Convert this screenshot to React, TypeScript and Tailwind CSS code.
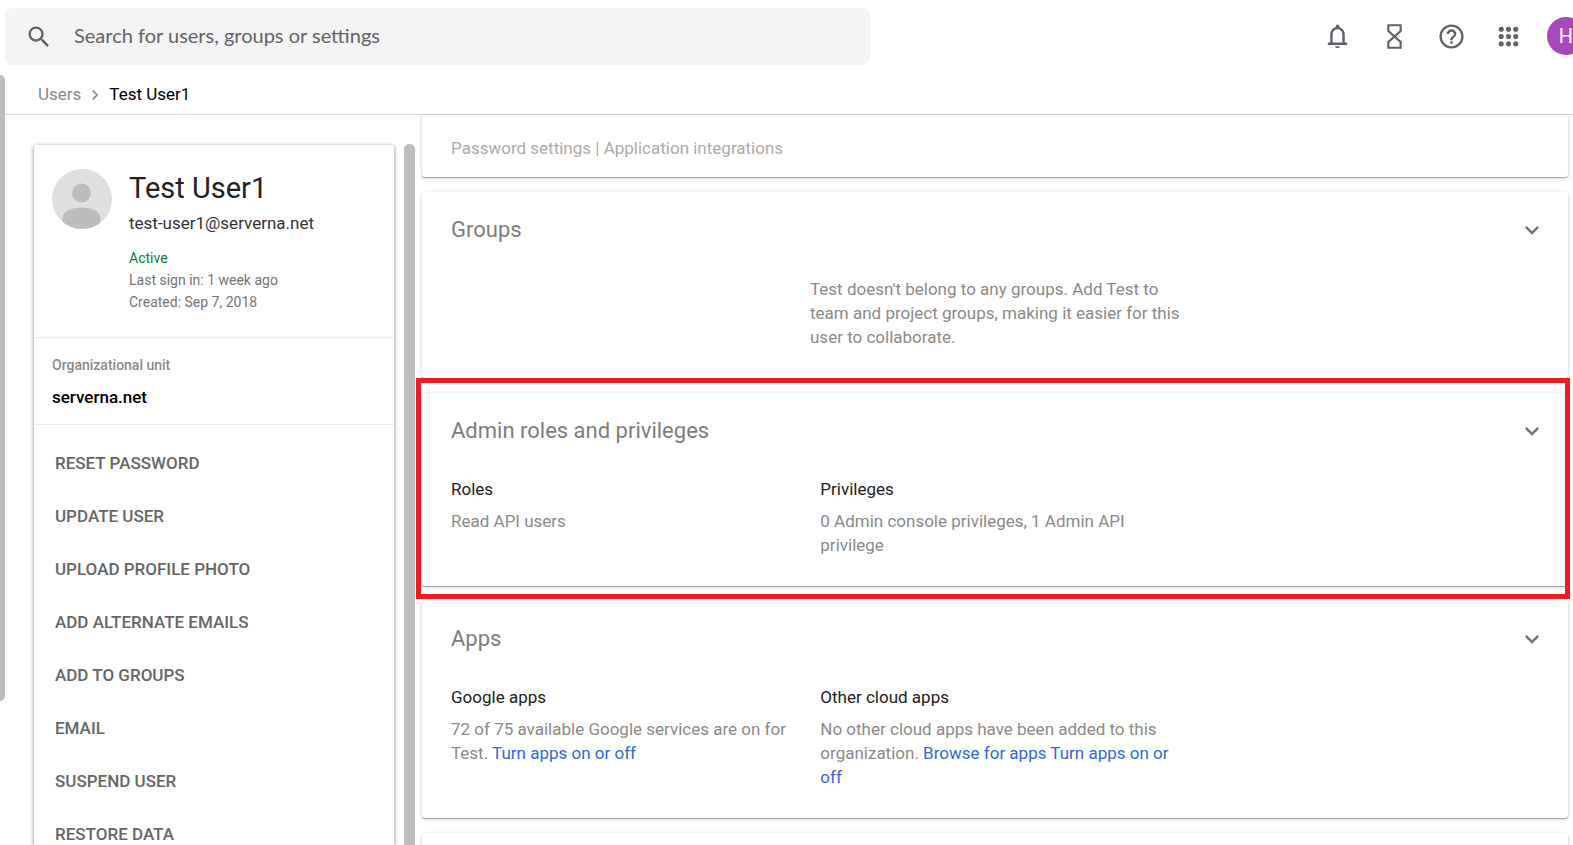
import React, { useState } from 'react';
import { MdSearch, MdHelpOutline, MdExpandMore, MdChevronRight } from 'react-icons/md';

const ACTIONS = [
  'Reset password',
  'Update user',
  'Upload profile photo',
  'Add alternate emails',
  'Add to groups',
  'Email',
  'Suspend user',
  'Restore data',
];

const CARD_SHADOW = 'shadow-[0_1px_1px_rgba(0,0,0,0.3),0_1px_4px_rgba(0,0,0,0.18)]';

function BellIcon() {
  return (
    <svg viewBox="0 0 24 24" className="w-[29px] h-[29px]" fill="currentColor" aria-hidden="true">
      <path d="M4 19v-2h2v-7q0-2.075 1.25-3.688T10.5 4.2v-.7q0-.625.438-1.062T12 2q.625 0 1.063.438T13.5 3.5v.7q2 .5 3.25 2.113T18 10v7h2v2H4zm8 2.600q-.825 0-1.412-.5T10 20h4q0 .6-.587 1.100T12 21.600zm-4-4.600h8v-7q0-1.65-1.175-2.825T12 6q-1.65 0-2.825 1.175T8 10v7z" />
    </svg>
  );
}

function HourglassIcon() {
  return (
    <svg viewBox="0 0 24 24" className="w-[29px] h-[29px]" fill="none" stroke="currentColor" strokeWidth="1.8" aria-hidden="true">
      <path d="M6.900 2.700h10.200v4.700L6.900 16.600v4.700h10.200v-4.700L6.900 7.400z" />
    </svg>
  );
}

function AppsIcon() {
  return (
    <svg viewBox="0 0 24 24" className="w-[29px] h-[29px]" fill="currentColor" aria-hidden="true">
      {[6, 12, 18].map((y) => [6, 12, 18].map((x) => <circle key={`${x}-${y}`} cx={x} cy={y} r="2.1" />))}
    </svg>
  );
}

function ProfilePhoto() {
  return (
    <svg viewBox="0 0 60 60" className="w-[60px] h-[60px] shrink-0" aria-hidden="true">
      <clipPath id="photo-clip">
        <circle cx="30" cy="30" r="30" />
      </clipPath>
      <g clipPath="url(#photo-clip)">
        <rect width="60" height="60" fill="#e0e0e0" />
        <circle cx="29.5" cy="24" r="9.5" fill="#bdbdbd" />
        <path d="M10.500 60V49C10.500 42 20 38.500 29.500 38.500S48.500 42 48.500 49V60z" fill="#bdbdbd" />
      </g>
    </svg>
  );
}

interface SectionCardProps {
  title: string;
  children: React.ReactNode;
}

function SectionCard({ title, children }: SectionCardProps) {
  return (
    <section className={`bg-white rounded-[3px] pt-6 pb-[29px] px-[29px] ${CARD_SHADOW}`}>
      <div className="flex items-center justify-between mb-8">
        <h2 className="text-[22px] leading-7 text-[#7d7d7d]">{title}</h2>
        <button type="button" aria-label={`Expand ${title}`} className="-mr-[7px] text-[#757575] cursor-pointer">
          <MdExpandMore className="w-7 h-7" />
        </button>
      </div>
      {children}
    </section>
  );
}

interface FieldProps {
  label: string;
  children: React.ReactNode;
}

function Field({ label, children }: FieldProps) {
  return (
    <div className="space-y-2">
      <h3 className="text-[17px] leading-6 text-[#212121]">{label}</h3>
      <p className="text-[17px] leading-6 text-[#8a8a8a]">{children}</p>
    </div>
  );
}

export default function App() {
  const [query, setQuery] = useState('');

  return (
    <div className="h-screen flex flex-col overflow-hidden bg-white font-['Roboto',sans-serif]">
      <header className="flex items-center justify-between pl-[5px] pt-2 shrink-0">
        <label className="flex items-center gap-[21px] w-full max-w-[865px] h-[57px] pl-5 rounded-lg bg-[#f4f4f4] text-[#5f6368]">
          <MdSearch className="w-7 h-7 shrink-0" aria-hidden="true" />
          <input
            type="text"
            value={query}
            onChange={(e) => setQuery(e.target.value)}
            placeholder="Search for users, groups or settings"
            aria-label="Search for users, groups or settings"
            className="flex-1 pb-1 bg-transparent outline-none font-['Lato',sans-serif] text-[20px] placeholder:text-[#5f6368]"
          />
        </label>
        <div className="flex items-center gap-6 pb-px -mr-3 text-[#5f6368]">
          <div className="flex items-center gap-7">
            <button type="button" aria-label="Notifications"><BellIcon /></button>
            <button type="button" aria-label="Tasks"><HourglassIcon /></button>
            <button type="button" aria-label="Help"><MdHelpOutline className="w-[29px] h-[29px]" /></button>
            <button type="button" aria-label="Google apps"><AppsIcon /></button>
          </div>
          <button type="button" className="w-[38px] h-[38px] rounded-full bg-[#ab47bc] text-white text-[20px]">H</button>
        </div>
      </header>

      <div className="flex flex-1 min-h-0">
        <div className="w-[5px] h-[626px] mt-[10px] rounded-r-[5px] bg-[#bdbdbd] shrink-0" />

        <div className="flex-1 min-w-0 flex flex-col">
          <nav className="flex items-center gap-1 h-[50px] pt-[10px] pl-[33px] border-b border-[#dadada] text-[17px] shrink-0">
            <a href="#users" className="text-[#8a8a8a]">Users</a>
            <MdChevronRight className="w-5 h-5 text-[#8a8a8a]" aria-hidden="true" />
            <span className="text-black">Test User1</span>
          </nav>

          <div className="flex flex-1 min-h-0 pl-[29px] pr-[5px]">
            <aside className="w-[360px] shrink-0 mt-[30px] rounded-t-[2px] bg-white shadow-[0_1px_4px_rgba(0,0,0,0.5)]">
              <div className="flex gap-[17px] h-[192px] pt-6 pl-[18px]">
                <ProfilePhoto />
                <div>
                  <h1 className="text-[29px] leading-[38px] text-[#212121]">Test User1</h1>
                  <p className="text-[17px] leading-8 text-[#333333]">test-user1@serverna.net</p>
                  <div className="mt-2 text-[14px] leading-[22px] text-[#757575]">
                    <p className="text-[#0b8043]">Active</p>
                    <p>Last sign in: 1 week ago</p>
                    <p>Created: Sep 7, 2018</p>
                  </div>
                </div>
              </div>
              <div className="h-22 pt-[15px] pl-[18px] border-y border-[#ebebeb]">
                <h2 className="text-[14px] leading-6 font-medium text-[#8a8a8a]">Organizational unit</h2>
                <p className="mt-2 text-[17px] leading-6 font-medium text-black">serverna.net</p>
              </div>
              <ul className="pt-3">
                {ACTIONS.map((action) => (
                  <li key={action}>
                    <button type="button" className="h-[53px] pl-[21px] text-[17px] font-medium uppercase text-[#666666] cursor-pointer">
                      {action}
                    </button>
                  </li>
                ))}
              </ul>
            </aside>

            <div className="w-[11px] shrink-0 mt-[29px] ml-[10px] rounded-t-[5px] bg-[#bdbdbd]" />

            <main className="flex-1 min-w-0 flex flex-col gap-[15px] pl-[7px]">
              <section className={`bg-white rounded-b-[3px] h-[62px] px-[29px] pt-[21px] shrink-0 text-[17px] leading-6 text-[#acacac] ${CARD_SHADOW}`}>
                Password settings | Application integrations
              </section>

              <SectionCard title="Groups">
                <div className="flex items-end justify-center min-h-[73px]">
                  <p className="w-[370px] text-[17px] leading-6 text-[#8a8a8a]">
                    Test doesn't belong to any groups. Add Test to team and project groups, making it easier for this user to collaborate.
                  </p>
                </div>
              </SectionCard>

              <div className="relative">
                <SectionCard title="Admin roles and privileges">
                  <div className="grid grid-cols-3 gap-5">
                    <Field label="Roles">Read API users</Field>
                    <Field label="Privileges">0 Admin console privileges, 1 Admin API privilege</Field>
                  </div>
                </SectionCard>
                <div className="absolute -top-[15px] -bottom-[13px] -left-[6px] -right-[2px] border-5 border-[#ed1c24] pointer-events-none" />
              </div>

              <SectionCard title="Apps">
                <div className="grid grid-cols-3 gap-5">
                  <Field label="Google apps">
                    72 of 75 available Google services are on for Test.{' '}
                    <a href="#turn-apps" className="text-[#3367d6]">Turn apps on or off</a>
                  </Field>
                  <Field label="Other cloud apps">
                    No other cloud apps have been added to this organization.{' '}
                    <a href="#browse" className="text-[#3367d6]">Browse for apps</a>{' '}
                    <a href="#turn-apps" className="text-[#3367d6]">Turn apps on or off</a>
                  </Field>
                </div>
              </SectionCard>

              <section className={`bg-white rounded-t-[3px] h-16 shrink-0 ${CARD_SHADOW}`} />
            </main>
          </div>
        </div>
      </div>
    </div>
  );
}
